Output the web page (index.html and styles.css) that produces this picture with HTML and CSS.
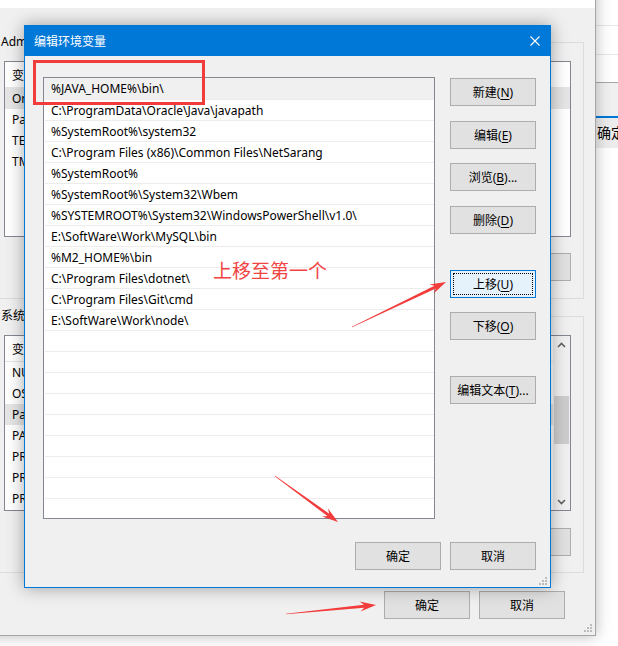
FILE: index.html
```html
<!DOCTYPE html>
<html>
<head>
<meta charset="utf-8">
<title>编辑环境变量</title>
<link rel="stylesheet" href="styles.css">
</head>
<body>
<div class="farwin">
  <div class="fw-line fw-a"></div>
  <div class="fw-line fw-b"></div>
  <div class="fw-line fw-c"></div>
  <div class="fw-band"></div>
  <div class="fw-btn">确定</div>
</div>

<div class="bgwin">
  <div class="bg-title"></div>
  <div class="bg-client">
    <div class="group g1">
      <span class="legend">Administrator 的用户变量(<u>U</u>)</span>
      <div class="lv">
        <div class="lv-head"><span class="c1">变量</span><span class="c2">值</span></div>
        <div class="lv-row sel"><span class="c1">OneDrive</span><span class="c2">C:\Users\Administrator\OneDrive</span></div>
        <div class="lv-row"><span class="c1">Path</span><span class="c2">%USERPROFILE%\AppData\Local\Microsoft\WindowsApps;</span></div>
        <div class="lv-row"><span class="c1">TEMP</span><span class="c2">%USERPROFILE%\AppData\Local\Temp</span></div>
        <div class="lv-row"><span class="c1">TMP</span><span class="c2">%USERPROFILE%\AppData\Local\Temp</span></div>
      </div>
      <div class="btnrow b1">
        <div class="btn">新建(<u>N</u>)...</div>
        <div class="btn">编辑(<u>E</u>)...</div>
        <div class="btn">删除(<u>D</u>)</div>
      </div>
    </div>
    <div class="group g2">
      <span class="legend">系统变量(<u>S</u>)</span>
      <div class="lv lv-scroll">
        <div class="lv-body">
          <div class="lv-head"><span class="c1">变量</span><span class="c2">值</span></div>
          <div class="lv-row"><span class="c1">NUMBER_OF_PROCESSORS</span><span class="c2">4</span></div>
          <div class="lv-row"><span class="c1">OS</span><span class="c2">Windows_NT</span></div>
          <div class="lv-row sel"><span class="c1">Path</span><span class="c2">%JAVA_HOME%\bin\;C:\ProgramData\Oracle</span></div>
          <div class="lv-row"><span class="c1">PATHEXT</span><span class="c2">.COM;.EXE;.BAT;.CMD;.VBS;.VBE</span></div>
          <div class="lv-row"><span class="c1">PROCESSOR_ARCHITECTURE</span><span class="c2">AMD64</span></div>
          <div class="lv-row"><span class="c1">PROCESSOR_IDENTIFIER</span><span class="c2">Intel64 Family 6 Model 142</span></div>
          <div class="lv-row"><span class="c1">PROCESSOR_LEVEL</span><span class="c2">6</span></div>
        </div>
        <div class="sb">
          <div class="sb-btn"><svg width="9" height="6" viewBox="0 0 9 6"><path d="M1 5 L4.5 1.5 L8 5" fill="none" stroke="#606060" stroke-width="1.6"/></svg></div>
          <div class="sb-track"><div class="sb-thumb"></div></div>
          <div class="sb-btn"><svg width="9" height="6" viewBox="0 0 9 6"><path d="M1 1 L4.5 4.5 L8 1" fill="none" stroke="#606060" stroke-width="1.6"/></svg></div>
        </div>
      </div>
      <div class="btnrow b2">
        <div class="btn">新建(<u>W</u>)...</div>
        <div class="btn">编辑(<u>I</u>)...</div>
        <div class="btn">删除(<u>L</u>)</div>
      </div>
    </div>
    <div class="bg-bottom">
      <div class="btn">确定</div>
      <div class="btn">取消</div>
    </div>
  </div>
  <svg class="grip bg-grip" width="8" height="8" viewBox="0 0 8 8"><g fill="#bcbcbc"><rect x="6" y="0" width="2" height="2"/><rect x="3" y="3" width="2" height="2"/><rect x="6" y="3" width="2" height="2"/><rect x="0" y="6" width="2" height="2"/><rect x="3" y="6" width="2" height="2"/><rect x="6" y="6" width="2" height="2"/></g></svg>
</div>

<div class="dlg">
  <div class="dlg-title">
    <span class="dlg-caption">编辑环境变量</span>
    <svg class="dlg-close" width="10" height="10" viewBox="0 0 10 10"><path d="M0.5 0.5 L9.5 9.5 M9.5 0.5 L0.5 9.5" stroke="#fff" stroke-width="1.1" fill="none"/></svg>
  </div>
  <div class="dlg-client">
    <div class="plist">
      <div class="pr first sel">%JAVA_HOME%\bin\</div>
      <div class="pr">C:\ProgramData\Oracle\Java\javapath</div>
      <div class="pr">%SystemRoot%\system32</div>
      <div class="pr">C:\Program Files (x86)\Common Files\NetSarang</div>
      <div class="pr">%SystemRoot%</div>
      <div class="pr">%SystemRoot%\System32\Wbem</div>
      <div class="pr">%SYSTEMROOT%\System32\WindowsPowerShell\v1.0\</div>
      <div class="pr">E:\SoftWare\Work\MySQL\bin</div>
      <div class="pr">%M2_HOME%\bin</div>
      <div class="pr">C:\Program Files\dotnet\</div>
      <div class="pr">C:\Program Files\Git\cmd</div>
      <div class="pr">E:\SoftWare\Work\node\</div>
      <div class="pr"></div>
      <div class="pr"></div>
      <div class="pr"></div>
      <div class="pr"></div>
      <div class="pr"></div>
      <div class="pr"></div>
      <div class="pr"></div>
      <div class="pr"></div>
      <div class="pr"></div>
      <div class="pr"></div>
    </div>
    <div class="bcol">
      <div class="btn m1">新建(<u>N</u>)</div>
      <div class="btn m15">编辑(<u>E</u>)</div>
      <div class="btn m14">浏览(<u>B</u>)...</div>
      <div class="btn m15">删除(<u>D</u>)</div>
      <div class="btn m36 focus">上移(<u>U</u>)</div>
      <div class="btn m14">下移(<u>O</u>)</div>
      <div class="btn m36">编辑文本(<u>T</u>)...</div>
    </div>
    <div class="dlg-bottom">
      <div class="btn">确定</div>
      <div class="btn">取消</div>
    </div>
  </div>
  <svg class="grip dlg-grip" width="8" height="8" viewBox="0 0 8 8"><g fill="#bcbcbc"><rect x="6" y="0" width="2" height="2"/><rect x="3" y="3" width="2" height="2"/><rect x="6" y="3" width="2" height="2"/><rect x="0" y="6" width="2" height="2"/><rect x="3" y="6" width="2" height="2"/><rect x="6" y="6" width="2" height="2"/></g></svg>
</div>

<div class="redbox"></div>
<div class="note">上移至第一个</div>
<svg class="arrows" width="618" height="646" viewBox="0 0 618 646">
  <g fill="#f23b3b">
    <polygon points="352.1,327.3 435.8,288.5 433.7,293.4 446,282 429.4,284.4 434.5,285.8 351.9,326.7"/>
    <polygon points="274.8,476.2 327.4,516.1 322.1,516.6 338,522 328.0,508.5 329.2,513.7 275.2,475.8"/>
    <polygon points="286.0,614.3 364.2,607.7 360.6,611.6 376,605 359.6,601.6 363.9,604.7 286.0,613.7"/>
  </g>
</svg>
</body>
</html>
```

FILE: styles.css
```css
html, body {
  margin: 0;
  padding: 0;
}

body {
  width: 618px;
  height: 646px;
  overflow: hidden;
  position: relative;
  background: #ffffff;
  font-family: "Noto Sans", "Noto Sans CJK SC", sans-serif;
  font-size: 12px;
  color: #000;
}

u {
  text-decoration: underline;
  text-underline-offset: 2px;
}

/* ---------- far right window ---------- */
.farwin {
  position: absolute;
  left: 596px;
  top: 0;
  width: 40px;
  height: 646px;
  background: #fff;
  display: flex;
  flex-direction: column;
}
.fw-line { flex: none; }
.fw-a { height: 25px; border-bottom: 1px solid #e6e6e6; }
.fw-b { height: 28px; border-bottom: 1px solid #e6e6e6; }
.fw-c { height: 27px; border-bottom: 1px solid #a8a8a8; }
.fw-band {
  height: 33px;
  background: #f0f0f0;
  border-bottom: 2px solid #0078d7;
}
.fw-btn {
  height: 30px;
  background: #ececec;
  font-size: 14px;
  line-height: 30px;
  padding-left: 1px;
  white-space: nowrap;
}

/* ---------- background window ---------- */
.bgwin {
  position: absolute;
  left: -20px;
  top: -22px;
  width: 616px;
  height: 658px;
  box-sizing: border-box;
  border: 1px solid #a5a5a5;
  border-top: 0;
  background: #f0f0f0;
  box-shadow: 0 0 14px rgba(0, 0, 0, 0.28);
  display: flex;
  flex-direction: column;
}
.bg-title {
  height: 30px;
  flex: none;
  background: #fff;
}
.bg-client {
  flex: 1;
  padding: 34px 11px 0 7px;
  display: flex;
  flex-direction: column;
}
.group {
  position: relative;
  border: 1px solid #dcdcdc;
  padding: 18px 12px 17px 15px;
  display: flex;
  flex-direction: column;
}
.g2 {
  margin-top: 17px;
  padding-bottom: 16px;
}
.legend {
  position: absolute;
  top: -9px;
  left: 11px;
  padding: 0 1px;
  background: #f0f0f0;
  line-height: 16px;
  white-space: nowrap;
}
.lv {
  height: 176px;
  box-sizing: border-box;
  border: 1px solid #828790;
  background: #fff;
  overflow: hidden;
}
.lv-scroll {
  display: flex;
}
.lv-body {
  flex: 1;
}
.lv-head {
  height: 25px;
  border-bottom: 1px solid #e5e5e5;
  display: flex;
  align-items: center;
}
.lv-row {
  height: 21px;
  display: flex;
  align-items: center;
  white-space: nowrap;
}
.lv-row.sel {
  background: #e5e5e5;
}
.c1 {
  width: 160px;
  flex: none;
  padding-left: 7px;
  overflow: hidden;
}
.c2 {
  flex: 1;
  overflow: hidden;
}
.sb {
  width: 17px;
  flex: none;
  background: #f0f0f0;
  display: flex;
  flex-direction: column;
}
.sb-btn {
  height: 17px;
  display: flex;
  align-items: center;
  justify-content: center;
}
.sb-track {
  flex: 1;
  padding: 43px 1px 0 1px;
}
.sb-thumb {
  height: 48px;
  background: #cdcdcd;
}
.btnrow {
  display: flex;
  justify-content: flex-end;
  gap: 9px;
}
.b1 { margin-top: 16px; }
.b2 { margin-top: 17px; }
.bg-bottom {
  display: flex;
  justify-content: flex-end;
  gap: 9px;
  margin-top: 18px;
  padding-right: 19px;
}

/* ---------- buttons ---------- */
.btn {
  width: 86px;
  height: 28px;
  flex: none;
  box-sizing: border-box;
  border: 1px solid #adadad;
  background: #e1e1e1;
  display: flex;
  align-items: center;
  justify-content: center;
  white-space: nowrap;
}
.btn.focus {
  background: #e5f1fb;
  border-color: #0078d7;
  outline: 1px dotted #000;
  outline-offset: -4px;
}

/* ---------- main dialog ---------- */
.dlg {
  position: absolute;
  left: 24px;
  top: 25px;
  width: 527px;
  height: 563px;
  box-sizing: border-box;
  border: 1px solid #0078d7;
  background: #f0f0f0;
  box-shadow: 0 0 16px rgba(0, 0, 0, 0.35);
  display: flex;
  flex-direction: column;
}
.dlg-title {
  height: 30px;
  flex: none;
  background: #0078d7;
  color: #fff;
  display: flex;
  align-items: center;
  padding: 0 10px 0 9px;
}
.dlg-caption {
  font-size: 12px;
  margin-top: -1px;
}
.dlg-close {
  margin-left: auto;
}
.dlg-client {
  flex: 1;
  display: grid;
  grid-template-columns: 392px 86px;
  grid-template-rows: 442px 28px;
  column-gap: 15px;
  row-gap: 23px;
  padding: 21px 14px 17px 18px;
}
.plist {
  box-sizing: border-box;
  border: 1px solid #828790;
  background: #fff;
  overflow: hidden;
}
.pr {
  height: 20px;
  margin-left: 1px;
  border-bottom: 1px solid #ececec;
  display: flex;
  align-items: center;
  padding-left: 6px;
  white-space: nowrap;
}
.pr.first {
  height: 21px;
}
.pr.sel {
  background: #f0f0f0;
  margin-left: 0;
  padding-left: 7px;
}
.bcol {
  display: flex;
  flex-direction: column;
}
.m1 { margin-top: 1px; }
.m14 { margin-top: 14px; }
.m15 { margin-top: 15px; }
.m36 { margin-top: 36px; }
.dlg-bottom {
  grid-column: 1 / 3;
  display: flex;
  justify-content: flex-end;
  gap: 9px;
}

.grip {
  position: absolute;
}
.dlg-grip {
  right: 3px;
  bottom: 2px;
}
.bg-grip {
  right: 3px;
  bottom: 3px;
}

/* ---------- annotations ---------- */
.redbox {
  position: absolute;
  left: 33px;
  top: 60px;
  width: 172px;
  height: 45px;
  box-sizing: border-box;
  border: 3px solid #f23b3b;
}
.note {
  position: absolute;
  left: 213px;
  top: 260px;
  font-family: "Noto Sans CJK SC", sans-serif;
  font-size: 19px;
  line-height: 19px;
  color: #f24444;
  white-space: nowrap;
}
.arrows {
  position: absolute;
  left: 0;
  top: 0;
  pointer-events: none;
}
```
